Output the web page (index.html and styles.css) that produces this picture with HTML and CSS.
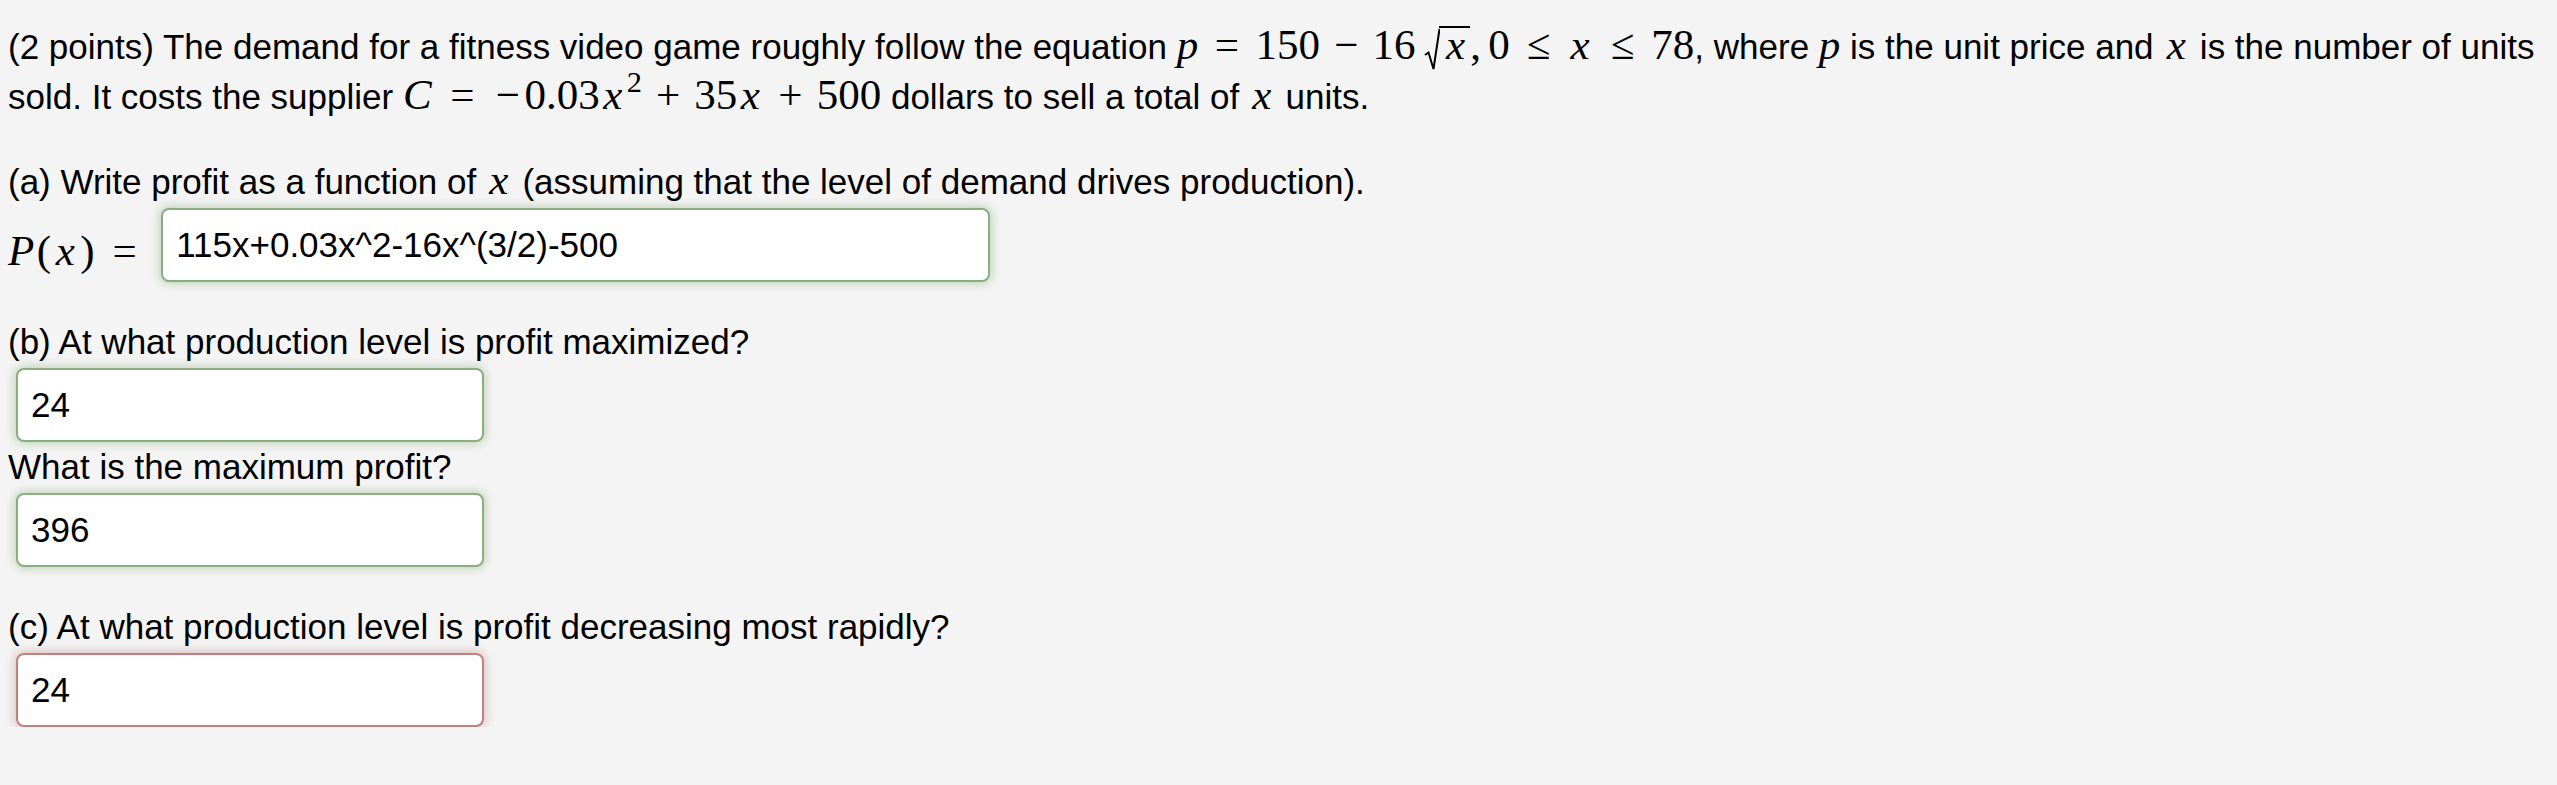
FILE: index.html
```html
<!DOCTYPE html>
<html>
<head>
<meta charset="utf-8">
<link rel="stylesheet" href="styles.css">
</head>
<body>
<div class="problem">
  <div class="intro">
    <div class="line">(2 points) The demand for a fitness video game roughly follow the equation <span class="m"><span class="mi">p</span><span class="op rel">=</span>150<span class="op bin">−</span>16<span class="sqrt"><svg class="rad" viewBox="0 0 16 43" width="16" height="43"><path d="M1 27 L4.5 24.5 L9.5 41 L15.5 1" fill="none" stroke="#000" stroke-width="2"/></svg><span class="radicand"><span class="mi mx">x</span></span></span>,<span class="thin"></span>0<span class="op rel">≤</span><span class="mi mx">x</span><span class="op rel">≤</span>78</span>, where <span class="m"><span class="mi">p</span></span> is the unit price and <span class="m"><span class="mi mx">x</span></span> is the number of units</div>
    <div class="line">sold. It costs the supplier <span class="m"><span class="mi mc">C</span><span class="op rel">=</span><span class="op">−</span>0.03<span class="mi mx">x</span><sup class="sup">2</sup><span class="op bin">+</span>35<span class="mi mx">x</span><span class="op bin">+</span>500</span> dollars to sell a total of <span class="m"><span class="mi mx">x</span></span> units.</div>
  </div>

  <div class="line part">(a) Write profit as a function of <span class="m"><span class="mi mx">x</span></span> (assuming that the level of demand drives production).</div>
  <div class="answer-row">
    <span class="m label"><span class="mi mp">P</span><span class="paren">(</span><span class="mi mx">x</span><span class="paren">)</span><span class="op rel">=</span></span>
    <input class="ans ans-wide correct" type="text" value="115x+0.03x^2-16x^(3/2)-500">
  </div>

  <div class="line part">(b) At what production level is profit maximized?</div>
  <input class="ans correct" type="text" value="24">
  <div class="line">What is the maximum profit?</div>
  <input class="ans correct" type="text" value="396">

  <div class="line part">(c) At what production level is profit decreasing most rapidly?</div>
  <input class="ans incorrect" type="text" value="24">
</div>
</body>
</html>
```

FILE: styles.css
```css
html, body {
  margin: 0;
  padding: 0;
  background: #f4f4f4;
}

body {
  font-family: "Liberation Sans", Arial, sans-serif;
  font-size: 35px;
  color: #000;
}

.problem {
  padding: 22px 8px 0 8px;
  display: flex;
  flex-direction: column;
  align-items: flex-start;
}

.line {
  line-height: 50px;
  white-space: nowrap;
}

.part {
  margin-top: 35px;
}

/* math (TeX-like) */
.m {
  font-family: "Liberation Serif", "Times New Roman", serif;
  font-size: 43px;
  line-height: 0;
}

.mi {
  font-style: italic;
}

.mx {
  padding: 0 0.1em 0 0.08em;
}

.mc {
  padding-right: 0.05em;
}

.mp {
  padding-right: 0.03em;
}

.paren {
  display: inline-block;
  width: 0.389em;
  text-align: center;
}

.op {
  display: inline-block;
  width: 0.778em;
  text-align: center;
}

.rel {
  margin: 0 0.278em;
}

.bin {
  margin: 0 0.222em;
}

.thin {
  display: inline-block;
  width: 0.167em;
}

.sqrt {
  white-space: nowrap;
  margin-left: 8px;
}

.rad {
  display: inline-block;
  vertical-align: -12px;
  margin-right: -1px;
}

.radicand {
  display: inline-block;
  border-top: 2px solid #000;
  line-height: 0.8em;
  padding: 0 1px 0 4px;
}

.sup {
  font-size: 0.707em;
  vertical-align: 0.55em;
  line-height: 0;
}

/* answers */
.answer-row {
  display: flex;
  align-items: center;
  gap: 8px;
  margin-top: 1px;
}

.label {
  line-height: 1;
  margin-top: 10px;
}

.ans {
  box-sizing: border-box;
  width: 468px;
  height: 74px;
  margin: 1px 0 0 8px;
  padding: 0 13px;
  background: #fff;
  border: 2px solid #8aae7f;
  border-radius: 8px;
  font-family: "Liberation Sans", Arial, sans-serif;
  font-size: 35px;
  color: #000;
  outline: none;
}

.ans-wide {
  width: 829px;
  margin: 0;
}

.correct {
  border-color: #8aae7f;
  box-shadow: 0 0 10px 2px rgba(136, 172, 122, 0.45);
}

.incorrect {
  border-color: #c28080;
  box-shadow: 0 0 10px 2px rgba(196, 120, 120, 0.4);
}
```
